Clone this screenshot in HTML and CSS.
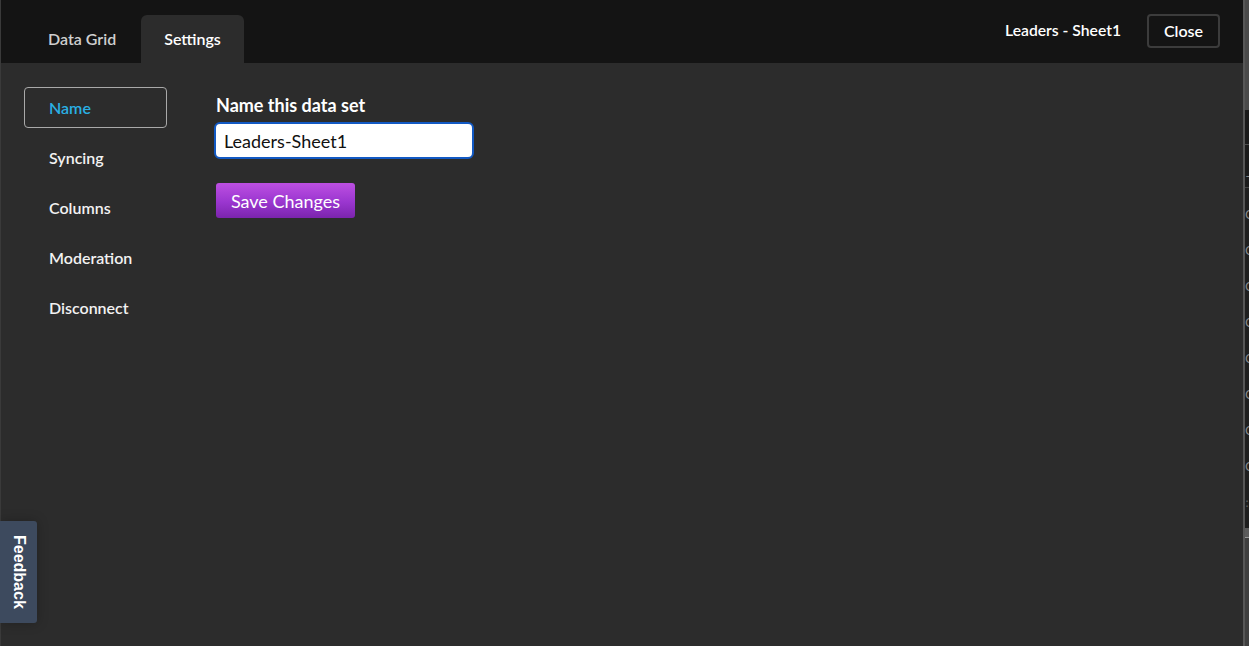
FILE: index.html
```html
<!DOCTYPE html>
<html lang="en">
<head>
    <meta charset="UTF-8">
    <meta name="viewport" content="width=device-width, initial-scale=1.0">
    <title>Leaders - Sheet1 Settings</title>
    <link rel="stylesheet" href="styles.css">
</head>
<body>
    <div class="panel">
        <div class="topbar">
            <div class="tabs">
                <a href="#" class="tab">Data Grid</a>
                <a href="#" class="tab active">Settings</a>
            </div>
            <div class="top-right">
                <span class="sheet-title">Leaders - Sheet1</span>
                <a href="#" class="close">Close</a>
            </div>
        </div>
        <div class="content">
            <ul class="side-nav">
                <li class="active"><a href="#">Name</a></li>
                <li><a href="#">Syncing</a></li>
                <li><a href="#">Columns</a></li>
                <li><a href="#">Moderation</a></li>
                <li><a href="#">Disconnect</a></li>
            </ul>
            <form class="settings-form">
                <label for="dataset-name">Name this data set</label>
                <input type="text" id="dataset-name" class="input" value="Leaders-Sheet1">
                <button type="button" class="save">Save Changes</button>
            </form>
        </div>
    </div>
    <!-- edge of the grid behind the overlay -->
    <div class="behind">
        <div class="b-head"></div>
        <div class="b-sub"></div>
        <div class="b-bar"><span>+</span></div>
        <div class="b-rows">
            <span>C</span><span>C</span><span>C</span><span>C</span>
            <span>C</span><span>C</span><span>C</span><span>C</span>
            <span class="dots">:</span>
        </div>
        <div class="b-scroll"></div>
        <div class="b-foot"></div>
    </div>
    <a href="#" class="feedback">Feedback</a>
</body>
</html>
```

FILE: styles.css
```css
* {
    margin: 0;
    padding: 0;
    box-sizing: border-box;
}

a {
    color: inherit;
    text-decoration: none;
}

body {
    display: flex;
    height: 100vh;
    overflow: hidden;
    font: 16px/20px "Lato", "Open Sans", sans-serif;
    color: #fff;
    background: #2c2c2c;
}

.panel {
    flex: 1;
    display: flex;
    flex-direction: column;
    background: #2c2c2c;
    border-left: 1px solid #3a3a3a;
    border-right: 2px solid #575757;
}

.topbar {
    height: 63px;
    display: flex;
    justify-content: space-between;
    background: #141414;
    padding: 0 23px 0 24px;
}

.tabs {
    display: flex;
    align-items: flex-end;
    gap: 2px;
}

.tab {
    height: 48px;
    padding: 0 23px;
    display: flex;
    align-items: center;
    font-weight: 600;
    color: #cfcfcf;
    border-radius: 6px 6px 0 0;
}

.tab.active {
    color: #fff;
    background: #2c2c2c;
}

.top-right {
    display: flex;
    align-items: center;
    gap: 26px;
    padding-bottom: 1px;
}

.sheet-title {
    font-size: 15.7px;
    font-weight: 600;
    padding-bottom: 2px;
}

.close {
    width: 73px;
    height: 34px;
    display: flex;
    align-items: center;
    justify-content: center;
    font-weight: 600;
    border: 2px solid #3c3c3c;
    border-radius: 4px;
}

.content {
    flex: 1;
    display: flex;
    padding: 24px 0 0 23px;
}

.side-nav {
    list-style: none;
    width: 143px;
}

.side-nav li {
    margin-bottom: 9px;
}

.side-nav a {
    height: 41px;
    display: flex;
    align-items: center;
    padding-left: 24px;
    font-size: 16px;
    font-weight: 600;
    color: #f2f2f2;
    border: 1px solid transparent;
    border-radius: 4px;
}

.side-nav li.active a {
    color: #2ab0e4;
    border-color: #a9a9a9;
}

.settings-form {
    display: flex;
    flex-direction: column;
    align-items: flex-start;
    margin-left: 47px;
    padding-top: 7px;
}

.settings-form label {
    font-size: 18px;
    line-height: 22px;
    font-weight: 700;
    padding-left: 2px;
    margin-bottom: 6px;
}

.input {
    width: 260px;
    height: 37px;
    padding: 0 8px;
    font: 18px "Lato", "Open Sans", sans-serif;
    color: #111;
    background: #fff;
    border: 2px solid #1259c3;
    border-radius: 6px;
    outline: 0;
    margin-bottom: 24px;
}

.save {
    margin-left: 2px;
    width: 139px;
    height: 35px;
    font: 18px "Lato", "Open Sans", sans-serif;
    color: #fff;
    border: none;
    border-radius: 3px;
    background: linear-gradient(180deg, #bd4fe2 0%, #9a36cf 55%, #7b24ad 100%);
    cursor: pointer;
}

/* sliver of the grid behind the overlay */
.behind {
    width: 4px;
    display: flex;
    flex-direction: column;
    background: #1b1b1b;
    overflow: hidden;
    font: 12px/14px "DejaVu Sans", sans-serif;
    color: #8a8a8a;
}

.b-head {
    height: 110px;
    background: #4a4a4a;
}

.b-sub {
    height: 35px;
    border-bottom: 1px solid #4d4d4d;
}

.b-bar {
    height: 43px;
    padding-top: 25px;
    border-bottom: 1px solid #444;
}

.b-rows {
    height: 340px;
    display: flex;
    flex-direction: column;
    padding-top: 20px;
    background: #1f1f1f;
}

.b-rows span {
    flex: none;
    height: 36px;
}

.b-rows .dots {
    color: #666;
}

.b-scroll {
    height: 10px;
    background: #5c5c5c;
    border-bottom: 1px solid #9a9a9a;
}

.b-foot {
    flex: 1;
    background: #3f3f3f;
}

.feedback {
    position: absolute;
    left: 0;
    top: 521px;
    width: 37px;
    height: 102px;
    display: flex;
    align-items: center;
    justify-content: center;
    writing-mode: vertical-rl;
    font: bold 16px "Liberation Sans", Arial, sans-serif;
    color: #fff;
    background: #3d4a5e;
    border-radius: 0 3px 3px 0;
    box-shadow: 0 0 12px rgba(0, 0, 0, 0.25);
}
```
